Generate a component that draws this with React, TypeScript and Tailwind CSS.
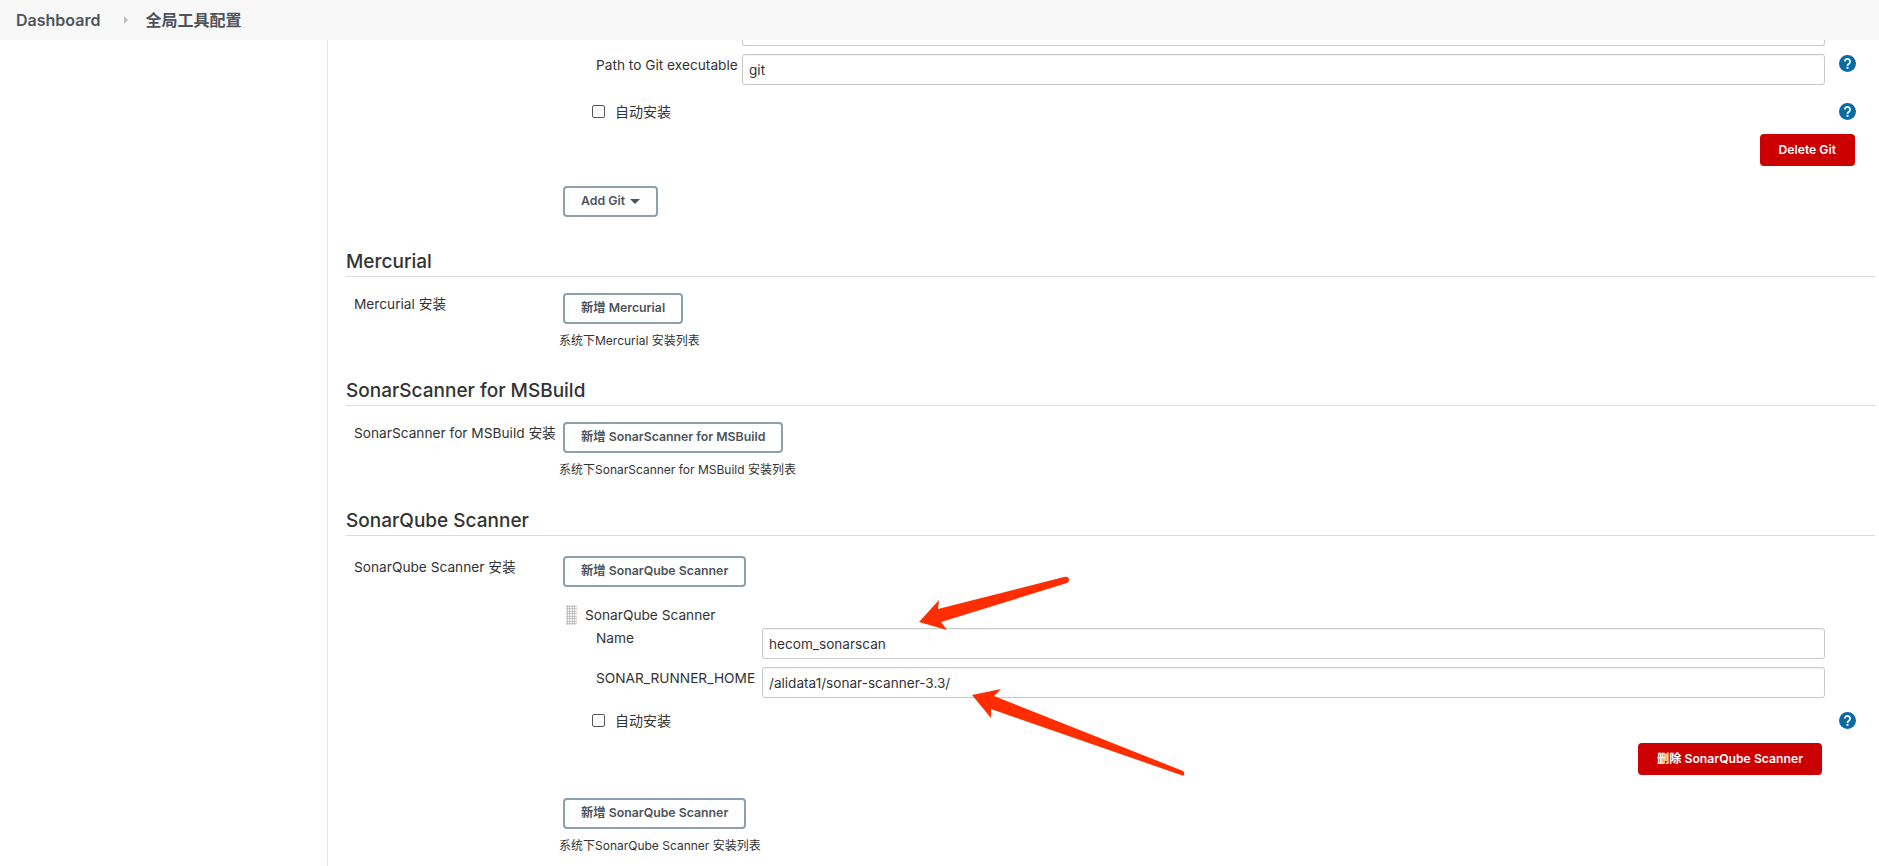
import React from "react";

const font = "[font-family:Inter,'Noto_Sans_CJK_SC',sans-serif]";

function HelpIcon() {
  return (
    <svg width="17" height="17" viewBox="0 0 17 17" className="block">
      <circle cx="8.5" cy="8.5" r="8.5" fill="#0b6aa2" />
      <path d="M5.9 6.5a2.6 2.6 0 1 1 4 2.2c-.9.6-1.4 1-1.4 2" fill="none" stroke="#fff" strokeWidth="1.8" />
      <rect x="7.5" y="11.8" width="2" height="2" fill="#fff" />
    </svg>
  );
}

function OutlineButton({ children, className = "" }: { children: React.ReactNode; className?: string }) {
  return (
    <button className={`h-[31px] px-[16px] border-2 border-[#8fa0ad] rounded-[4px] bg-white text-[#4d545d] text-[12.3px] font-semibold flex items-center whitespace-nowrap ${className}`}>
      {children}
    </button>
  );
}

function DangerButton({ children }: { children: React.ReactNode }) {
  return (
    <button className="h-[32px] px-[19px] rounded-[4px] bg-[#cc0000] text-white text-[12.2px] font-semibold whitespace-nowrap">
      {children}
    </button>
  );
}

function TextField({ value, className = "" }: { value: string; className?: string }) {
  return (
    <div className={`h-[31px] border border-[#c9c9c9] rounded-[3px] px-[6px] pt-[5px] text-[13.6px] leading-[20px] text-[#333] shadow-[inset_0_1px_1px_rgba(0,0,0,0.05)] ${className}`}>
      {value}
    </div>
  );
}

function AutoInstall({ className = "" }: { className?: string }) {
  return (
    <div className={`flex items-center justify-between h-[20px] ml-[246px] ${className}`}>
      <label className="flex items-center gap-[10px] text-[14px] text-[#333]">
        <span className="block w-[13px] h-[13px] border border-[#555] rounded-[2px] bg-white" />
        自动安装
      </label>
      <div className="mr-[19px]"><HelpIcon /></div>
    </div>
  );
}

function Section({ title, children }: { title: string; children: React.ReactNode }) {
  return (
    <section>
      <h2 className="h-[28px] text-[19px] leading-[26px] font-medium text-[#333] border-b border-[#dcdcdc]">{title}</h2>
      {children}
    </section>
  );
}

function Arrows() {
  return (
    <svg className="absolute inset-0 pointer-events-none" width="1879" height="866" viewBox="0 0 1879 866">
      <path d="M919 622L939 600L938 609L1064 577Q1069 576 1069 580Q1069 582 1067 583L941 622L947 630Z" fill="#ff2d00" />
      <path d="M972 695L1001 689L994 696L1183 771Q1185 773 1184 775Q1183 776 1181 775L991 709L991 718Z" fill="#ff2d00" />
    </svg>
  );
}

export default function App() {
  return (
    <div className={`relative h-[866px] overflow-hidden bg-white ${font}`}>
      <header className="flex items-center h-10 bg-[#f8f8f8] pl-4 text-[16px] font-semibold text-[#4d545d]">
        <span>Dashboard</span>
        <span className="ml-6 mr-[17px] block w-0 h-0 border-y-[4px] border-y-transparent border-l-[4px] border-l-[#b8bcc0]" />
        <span>全局工具配置</span>
      </header>

      <div className="flex h-[826px]">
        <aside className="w-[328px] shrink-0 border-r border-[#e8e8e8]" />

        <main className="flex-1 pl-[18px] pr-1">
          {/* Git 安装 */}
          <div className="h-[6px] ml-[396px] w-[1083px] border border-t-0 border-[#c9c9c9] rounded-b-[3px]" />
          <div className="flex mt-2 ml-[250px]">
            <label className="w-[146px] pt-[1px] text-[13.7px] leading-[20px] text-[#333] whitespace-nowrap">Path to Git executable</label>
            <TextField value="git" className="w-[1083px]" />
            <div className="ml-[14px] pt-[1px]"><HelpIcon /></div>
          </div>
          <AutoInstall className="mt-[16px]" />
          <div className="flex justify-end mt-[13px] mr-[20px]">
            <DangerButton>Delete Git</DangerButton>
          </div>
          <OutlineButton className="mt-[20px] ml-[217px] gap-[5px]">
            Add Git
            <span className="block w-0 h-0 border-x-[5px] border-x-transparent border-t-[5px] border-t-[#4d545d]" />
          </OutlineButton>

          <div className="mt-[32px]">
            <Section title="Mercurial">
              <div className="flex mt-[16px]">
                <div className="w-[217px] pl-2 text-[13.7px] leading-[20px] pt-[1px] text-[#333]">Mercurial 安装</div>
                <div>
                  <OutlineButton>新增 Mercurial</OutlineButton>
                  <p className="mt-[9px] -ml-1 text-[12px] leading-[16px] text-[#333]">系统下Mercurial 安装列表</p>
                </div>
              </div>
            </Section>
          </div>

          <div className="mt-[29px]">
            <Section title="SonarScanner for MSBuild">
              <div className="flex mt-[16px]">
                <div className="w-[217px] pl-2 text-[13.7px] leading-[20px] pt-[1px] text-[#333]">SonarScanner for MSBuild 安装</div>
                <div>
                  <OutlineButton>新增 SonarScanner for MSBuild</OutlineButton>
                  <p className="mt-[9px] -ml-1 text-[12px] leading-[16px] text-[#333]">系统下SonarScanner for MSBuild 安装列表</p>
                </div>
              </div>
            </Section>
          </div>

          <div className="mt-[30px]">
            <Section title="SonarQube Scanner">
              <div className="flex mt-[20px]">
                <div className="w-[217px] pl-2 text-[13.7px] leading-[20px] pt-[1px] text-[#333]">SonarQube Scanner 安装</div>
                <div className="flex-1">
                  <OutlineButton className="w-fit">新增 SonarQube Scanner</OutlineButton>

                  <div className="flex items-center mt-[18px] h-[20px]">
                    <span className="block w-[11px] h-[20px] ml-[3px] bg-[radial-gradient(#aaa_0.8px,transparent_1px)] bg-[length:2.5px_2.5px]" />
                    <span className="ml-[8px] text-[13.7px] text-[#333]">SonarQube Scanner</span>
                  </div>
                  <div className="flex mt-[3px] ml-[33px]">
                    <label className="w-[166px] text-[13.7px] leading-[20px] text-[#333] whitespace-nowrap">Name</label>
                    <TextField value="hecom_sonarscan" className="w-[1063px]" />
                  </div>
                  <div className="flex mt-[8px] ml-[33px]">
                    <label className="w-[166px] pt-[1px] text-[13.7px] leading-[20px] text-[#333] whitespace-nowrap">SONAR_RUNNER_HOME</label>
                    <TextField value="/alidata1/sonar-scanner-3.3/" className="w-[1063px]" />
                  </div>
                </div>
              </div>
              <AutoInstall className="mt-[12px]" />
              <div className="flex justify-end mt-[13px] mr-[53px]">
                <DangerButton>删除 SonarQube Scanner</DangerButton>
              </div>
              <OutlineButton className="mt-[23px] ml-[217px]">新增 SonarQube Scanner</OutlineButton>
              <p className="mt-[9px] ml-[213px] text-[12px] leading-[16px] text-[#333]">系统下SonarQube Scanner 安装列表</p>
            </Section>
          </div>
        </main>
      </div>

      <Arrows />
    </div>
  );
}
